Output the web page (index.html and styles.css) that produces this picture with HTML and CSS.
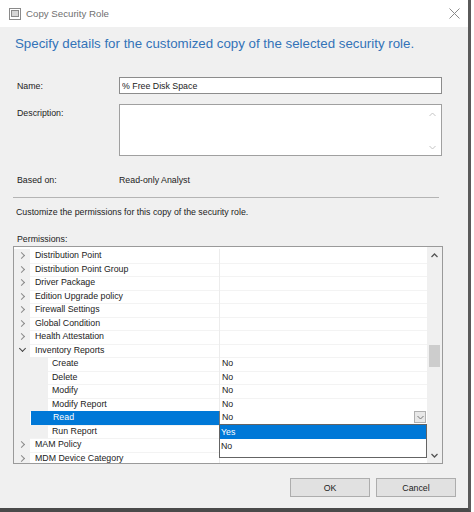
FILE: index.html
```html
<!DOCTYPE html>
<html lang="en">
<head>
    <meta charset="UTF-8">
    <title>Copy Security Role</title>
    <link rel="stylesheet" href="styles.css">
</head>
<body>
    <div class="window">
        <div class="titlebar">
            <svg class="app-icon" width="12" height="12" viewBox="0 0 12 12">
                <rect x="0.5" y="0.5" width="11" height="11" fill="#fff" stroke="#8a8a8a"/>
                <rect x="2.5" y="2.5" width="7" height="6" fill="#d6d6d6" stroke="#8a8a8a"/>
            </svg>
            <span class="title">Copy Security Role</span>
            <svg class="close" width="11" height="11" viewBox="0 0 11 11">
                <path d="M0.5 0.5 L10.5 10.5 M10.5 0.5 L0.5 10.5" stroke="#8a8a8a" stroke-width="1"/>
            </svg>
        </div>

        <div class="content">
            <h1 class="heading">Specify details for the customized copy of the selected security role.</h1>

            <div class="form-row name-row">
                <label class="label" for="roleName">Name:</label>
                <input class="text-input" id="roleName" type="text" value="% Free Disk Space">
            </div>

            <div class="form-row desc-row">
                <label class="label top" for="roleDesc">Description:</label>
                <div class="textarea" id="roleDesc">
                    <div class="ta-body"></div>
                    <div class="ta-scroll">
                        <svg width="7" height="5" viewBox="0 0 7 5"><path d="M0.5 4 L3.5 1 L6.5 4" fill="none" stroke="#c4c4c4"/></svg>
                        <svg width="7" height="5" viewBox="0 0 7 5"><path d="M0.5 1 L3.5 4 L6.5 1" fill="none" stroke="#c4c4c4"/></svg>
                    </div>
                </div>
            </div>

            <div class="form-row based-row">
                <span class="label">Based on:</span>
                <span class="value">Read-only Analyst</span>
            </div>

            <div class="separator"></div>

            <p class="note">Customize the permissions for this copy of the security role.</p>

            <p class="note perm-label">Permissions:</p>

            <div class="grid">
                <div class="rows">
                    <div class="row cat"><span class="hdr"><i class="chev-r"></i></span><span class="name">Distribution Point</span><span class="val"></span></div>
                    <div class="row cat"><span class="hdr"><i class="chev-r"></i></span><span class="name">Distribution Point Group</span><span class="val"></span></div>
                    <div class="row cat"><span class="hdr"><i class="chev-r"></i></span><span class="name">Driver Package</span><span class="val"></span></div>
                    <div class="row cat"><span class="hdr"><i class="chev-r"></i></span><span class="name">Edition Upgrade policy</span><span class="val"></span></div>
                    <div class="row cat"><span class="hdr"><i class="chev-r"></i></span><span class="name">Firewall Settings</span><span class="val"></span></div>
                    <div class="row cat"><span class="hdr"><i class="chev-r"></i></span><span class="name">Global Condition</span><span class="val"></span></div>
                    <div class="row cat"><span class="hdr"><i class="chev-r"></i></span><span class="name">Health Attestation</span><span class="val"></span></div>
                    <div class="row cat"><span class="hdr"><i class="chev-d"></i></span><span class="name">Inventory Reports</span><span class="val"></span></div>
                    <div class="row child"><span class="hdr"></span><span class="name"><b class="indent"></b>Create</span><span class="val">No</span></div>
                    <div class="row child"><span class="hdr"></span><span class="name"><b class="indent"></b>Delete</span><span class="val">No</span></div>
                    <div class="row child"><span class="hdr"></span><span class="name"><b class="indent"></b>Modify</span><span class="val">No</span></div>
                    <div class="row child"><span class="hdr"></span><span class="name"><b class="indent"></b>Modify Report</span><span class="val">No</span></div>
                    <div class="row child selected"><span class="hdr"></span><span class="name">Read</span>
                        <span class="val combo">No
                            <span class="combo-btn"><svg width="7" height="5" viewBox="0 0 7 5"><path d="M0.5 1 L3.5 4 L6.5 1" fill="none" stroke="#777"/></svg></span>
                            <span class="dropdown">
                                <span class="opt active">Yes</span>
                                <span class="opt">No</span>
                            </span>
                        </span>
                    </div>
                    <div class="row child"><span class="hdr"></span><span class="name"><b class="indent"></b>Run Report</span><span class="val"></span></div>
                    <div class="row cat"><span class="hdr"><i class="chev-r"></i></span><span class="name">MAM Policy</span><span class="val"></span></div>
                    <div class="row cat"><span class="hdr"><i class="chev-r"></i></span><span class="name">MDM Device Category</span><span class="val"></span></div>
                </div>
                <div class="scrollbar">
                    <svg width="7" height="5" viewBox="0 0 7 5"><path d="M0.5 4 L3.5 1 L6.5 4" fill="none" stroke="#555" stroke-width="1.3"/></svg>
                    <div class="track"><div class="thumb"></div></div>
                    <svg width="7" height="5" viewBox="0 0 7 5"><path d="M0.5 1 L3.5 4 L6.5 1" fill="none" stroke="#555" stroke-width="1.3"/></svg>
                </div>
            </div>

            <div class="buttons">
                <button class="btn">OK</button>
                <button class="btn">Cancel</button>
            </div>
        </div>
    </div>
</body>
</html>
```

FILE: styles.css
```css
body {
    margin: 0;
    background: #ffffff;
    font-family: "Liberation Sans", Arial, sans-serif;
    font-size: 8.8px;
    color: #222;
}
.window {
    width: 468px;
    height: 508px;
    background: #f0f0f0;
    border-right: 3px solid #5a5a5a;
    border-bottom: 4px solid #4a4a4a;
    display: flex;
    flex-direction: column;
}
.titlebar {
    height: 27px;
    background: #ffffff;
    display: flex;
    align-items: center;
    padding-left: 9px;
    padding-right: 7px;
}
.app-icon {
    margin-right: 5px;
}
.title {
    font-size: 9.7px;
    color: #707070;
    flex: 1;
}
.close {
    margin-right: 1px;
}
.content {
    padding-left: 13px;
    display: flex;
    flex-direction: column;
}
.heading {
    margin: 9px 0 0 2px;
    font-size: 13.3px;
    font-weight: normal;
    line-height: 16px;
    color: #3373b8;
    white-space: nowrap;
}
.form-row {
    display: flex;
    align-items: center;
}
.label {
    width: 102px;
    padding-left: 4px;
    line-height: 12px;
}
.label.top {
    align-self: flex-start;
    padding-top: 3px;
}
.name-row {
    margin-top: 25px;
}
.text-input {
    box-sizing: border-box;
    width: 323px;
    height: 17px;
    margin: 0;
    border: 1px solid #8c8c8c;
    padding: 0 2px;
    font-family: inherit;
    font-size: 8.8px;
    color: #222;
    background: #fff;
    outline: none;
}
.desc-row {
    margin-top: 10px;
}
.textarea {
    box-sizing: border-box;
    width: 323px;
    height: 52px;
    border: 1px solid #a0a0a0;
    background: #fff;
    display: flex;
}
.ta-body {
    flex: 1;
}
.ta-scroll {
    width: 17px;
    display: flex;
    flex-direction: column;
    justify-content: space-between;
    align-items: center;
    padding: 7px 0 5px;
}
.based-row {
    margin-top: 18px;
}
.value {
    line-height: 12px;
}
.separator {
    margin-top: 11px;
    width: 426px;
    height: 1px;
    background: #b4b4b4;
}
.note {
    margin: 8px 0 0 3px;
    line-height: 12px;
}
.perm-label {
    margin-top: 15px;
    margin-left: 4px;
}
.grid {
    margin-top: 1px;
    width: 430px;
    height: 218px;
    box-sizing: border-box;
    border: 1px solid #9a9a9a;
    background: #fff;
    display: flex;
}
.rows {
    flex: 1;
    display: flex;
    flex-direction: column;
    padding-top: 2px;
    overflow: hidden;
}
.row {
    height: 13.53px;
    flex: none;
    display: grid;
    grid-template-columns: 16px 189px 1fr;
    line-height: 13.5px;
}
.row > span {
    box-sizing: border-box;
    border-bottom: 1px solid #f3f3f3;
}
.hdr {
    background: #f0f0f0;
    display: flex;
    align-items: center;
    justify-content: center;
    border-bottom-color: #f0f0f0 !important;
}
.name {
    padding-left: 5px;
    white-space: nowrap;
    display: flex;
}
.child .name {
    padding-left: 0;
}
.indent {
    width: 18px;
    margin-right: 4px;
    background: #f0f0f0;
}
.val {
    border-left: 1px solid #ececec;
    padding-left: 2px;
    position: relative;
}
.chev-r, .chev-d {
    display: block;
    width: 4px;
    height: 4px;
    border-right: 1px solid #8a8a8a;
    border-bottom: 1px solid #8a8a8a;
}
.chev-r {
    transform: rotate(-45deg);
    margin-left: -2px;
}
.chev-d {
    transform: rotate(45deg);
    margin-top: -3px;
    border-color: #444;
}
.selected .name {
    background: #0078d7;
    color: #fff;
    padding-left: 22px;
    margin-left: 1px;
}
.combo {
    background: #fff;
    border-left: 1px solid #7a7a7a !important;
}
.combo-btn {
    position: absolute;
    right: 1px;
    top: 0;
    width: 12px;
    height: 12px;
    box-sizing: border-box;
    border: 1px solid #b0b0b0;
    background: #e8e8e8;
    display: flex;
    align-items: center;
    justify-content: center;
}
.dropdown {
    position: absolute;
    left: -1px;
    right: 0;
    top: 13px;
    height: 34px;
    box-sizing: border-box;
    border: 1px solid #646464;
    background: #fff;
    display: flex;
    flex-direction: column;
    z-index: 2;
}
.opt {
    height: 14px;
    line-height: 14px;
    padding-left: 1px;
    color: #222;
}
.opt.active {
    background: #0078d7;
    color: #fff;
}
.scrollbar {
    width: 15px;
    background: #f0f0f0;
    display: flex;
    flex-direction: column;
    align-items: center;
    padding: 6px 0 5px;
    box-sizing: border-box;
}
.track {
    flex: 1;
    width: 100%;
    position: relative;
}
.thumb {
    position: absolute;
    left: 2px;
    right: 2px;
    top: 87px;
    height: 22px;
    background: #cdcdcd;
}
.buttons {
    margin-top: 14px;
    display: flex;
    justify-content: flex-end;
    gap: 6px;
    padding-right: 12px;
}
.btn {
    width: 80px;
    height: 19px;
    margin: 0;
    padding: 0;
    border: 1px solid #adadad;
    background: #e1e1e1;
    font-family: inherit;
    font-size: 8.8px;
    color: #222;
}
```
